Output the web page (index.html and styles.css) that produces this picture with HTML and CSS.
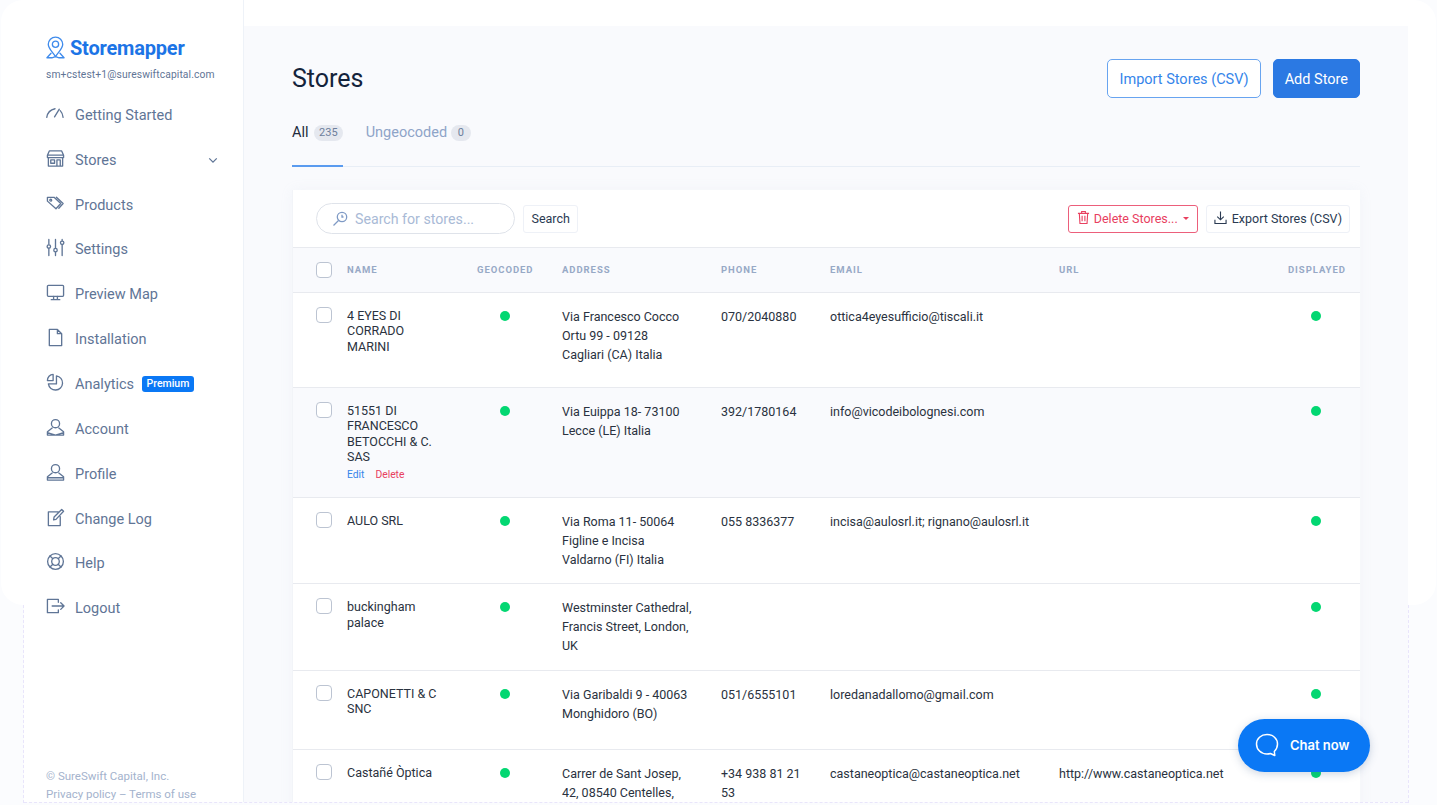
FILE: index.html
```html
<!DOCTYPE html>
<html lang="en">
<head>
<meta charset="utf-8">
<title>Storemapper – Stores</title>
<link rel="stylesheet" href="styles.css">
</head>
<body>
<div class="backdrop"></div>
<div class="app">
  <aside class="sidebar">
    <div class="brand">
      <svg class="brand-pin" viewBox="0 0 20 24" fill="none" stroke="currentColor" stroke-width="1.4" stroke-linejoin="round" stroke-linecap="round"><path d="M10 1a7.6 7.6 0 0 1 7.6 7.6c0 4.6-4.4 7.9-7.6 12.9C6.8 16.500 2.400 13.200 2.400 8.600A7.600 7.600 0 0 1 10 1z"/><circle cx="10" cy="8.500" r="3.300"/><path d="M5.300 18 1 22.800h5.200l3.800-1.300 3.800 1.300H19L14.700 18"/></svg>
      <span class="brand-name">Storemapper</span>
    </div>
    <div class="account-email">sm+cstest+1@sureswiftcapital.com</div>
    <nav class="nav">
      <a class="nav-item"><svg class="nav-icon" viewBox="0 0 20 20"><path d="M.8 14C1.500 9.500 5 6 9.500 5M9 13.500 14 5.500M15 7c1.500 1.500 2.500 4 3 7"/></svg><span>Getting Started</span></a>
      <a class="nav-item"><svg class="nav-icon" viewBox="0 0 20 20"><path d="M3.500 2h13l2 4.500h-17zM1.500 6.500v2.500h17V6.500M2.500 9v9h15V9M5 11.500h4v3.500H5zM11.500 18v-6.500h3.500V18"/></svg><span>Stores</span><svg class="nav-caret" viewBox="0 0 12 8"><path d="M1.500 1.500 6 6l4.500-4.500"/></svg></a>
      <a class="nav-item"><svg class="nav-icon" viewBox="0 0 20 20"><path d="M1.500 3.500h7l7 6.500-5 5.500-9-8zM11 3.500l7 6.500-4.500 5"/><circle cx="5" cy="6.500" r="1"/></svg><span>Products</span></a>
      <a class="nav-item"><svg class="nav-icon" viewBox="0 0 20 20"><path d="M3 1.500v5M3 11.500v7M10 1.500v9M10 15v3.500M17 1.500v1M17 7.500v11"/><circle cx="3" cy="9" r="1.800"/><circle cx="10" cy="12.800" r="1.800"/><circle cx="17" cy="5" r="1.800"/></svg><span>Settings</span></a>
      <a class="nav-item"><svg class="nav-icon" viewBox="0 0 20 20"><rect x="1.500" y="2.500" width="17" height="11.500" rx="1"/><path d="M8 14v3M12 14v3M5.500 17.500h9"/></svg><span>Preview Map</span></a>
      <a class="nav-item"><svg class="nav-icon" viewBox="0 0 20 20"><path d="M3.500 1.500h8.500l4.500 4.500v12.500h-13zM12 1.500V6h4.500"/></svg><span>Installation</span></a>
      <a class="nav-item"><svg class="nav-icon" viewBox="0 0 20 20"><path d="M11 3a7.500 7.500 0 1 1-8.500 8.500H11zM7.500 1.500v6.500H1.500c0-3.500 2.500-6.500 6-6.500z"/></svg><span>Analytics</span><span class="premium">Premium</span></a>
      <a class="nav-item"><svg class="nav-icon" viewBox="0 0 20 20"><circle cx="10" cy="6" r="4.300"/><path d="M6.500 10.500 1.500 14.500v3.500h17v-3.500l-5-4M1.500 15.500l8.500 2.500 8.500-2.500"/></svg><span>Account</span></a>
      <a class="nav-item"><svg class="nav-icon" viewBox="0 0 20 20"><circle cx="10" cy="6" r="4.300"/><path d="M6.500 10.500 1.500 14.500v3.500h17v-3.500l-5-4M1.500 15.500h17"/></svg><span>Profile</span></a>
      <a class="nav-item"><svg class="nav-icon" viewBox="0 0 20 20"><path d="M13 4H2.500v14.500H15V9M8 12.500l.5-3L16.500 1.500l2 2L10.500 12z"/></svg><span>Change Log</span></a>
      <a class="nav-item"><svg class="nav-icon" viewBox="0 0 20 20"><circle cx="10" cy="10" r="8.300"/><circle cx="10" cy="10" r="4"/><path d="M4.200 4.200 7.200 7.200M15.800 4.200l-3 3M4.200 15.800l3-3M15.800 15.800l-3-3"/></svg><span>Help</span></a>
      <a class="nav-item"><svg class="nav-icon" viewBox="0 0 20 20"><path d="M13 5.500V2.500H1.500v14H13v-3M6.500 9.500h12.500M15.500 6l3.500 3.500-3.500 3.500"/></svg><span>Logout</span></a>
    </nav>
    <footer class="side-footer">
      <div>© SureSwift Capital, Inc.</div>
      <div>Privacy policy – Terms of use</div>
    </footer>
  </aside>
  <main class="main">
    <header class="page-head">
      <h1 class="page-title">Stores</h1>
      <div class="head-actions">
        <button class="btn btn-outline">Import Stores (CSV)</button>
        <button class="btn btn-primary">Add Store</button>
      </div>
    </header>
    <div class="tabs">
      <a class="tab tab-active">All <span class="count">235</span></a>
      <a class="tab">Ungeocoded <span class="count count-small">0</span></a>
    </div>
    <section class="card">
      <div class="toolbar">
        <div class="search-box">
          <svg class="search-icon" viewBox="0 0 16 16"><circle cx="10" cy="6" r="4.700"/><path d="M6.500 9.500 1.500 14.500"/><path d="M10 3.800V6h1.500"/></svg>
          <span class="search-placeholder">Search for stores...</span>
        </div>
        <button class="tool-btn tool-search">Search</button>
        <button class="tool-btn tool-danger">
          <svg class="tool-icon" viewBox="0 0 14 16"><path d="M1 3.500h12M5 3.500V1.500h4v2M2.500 3.500l.7 11h7.600l.7-11M5.500 6v6M8.500 6v6"/></svg>
          <span>Delete Stores...</span><i class="caret"></i>
        </button>
        <button class="tool-btn">
          <svg class="tool-icon" viewBox="0 0 14 16"><path d="M7 1.500v8.500M3.500 7 7 10.500 10.500 7M1 10.500v4h12v-4"/></svg>
          <span>Export Stores (CSV)</span>
        </button>
      </div>
      <div class="row row-head">
        <div><span class="check"></span></div>
        <div>Name</div><div>Geocoded</div><div>Address</div><div>Phone</div><div>Email</div><div>URL</div><div>Displayed</div>
      </div>
      <div class="row">
        <div><span class="check"></span></div>
        <div class="name">4 EYES DI<br>CORRADO<br>MARINI<div class="actions actions-hidden"><a class="edit">Edit</a><a class="delete">Delete</a></div></div>
        <div><i class="dot"></i></div>
        <div>Via Francesco Cocco<br>Ortu 99 - 09128<br>Cagliari (CA) Italia</div>
        <div>070/2040880</div><div>ottica4eyesufficio@tiscali.it</div><div></div><div><i class="dot"></i></div>
      </div>
      <div class="row row-hover">
        <div><span class="check"></span></div>
        <div class="name">51551 DI<br>FRANCESCO<br>BETOCCHI &amp; C.<br>SAS<div class="actions"><a class="edit">Edit</a><a class="delete">Delete</a></div></div>
        <div><i class="dot"></i></div>
        <div>Via Euippa 18- 73100<br>Lecce (LE) Italia</div>
        <div>392/1780164</div><div>info@vicodeibolognesi.com</div><div></div><div><i class="dot"></i></div>
      </div>
      <div class="row">
        <div><span class="check"></span></div>
        <div class="name">AULO SRL<div class="actions actions-hidden"><a class="edit">Edit</a><a class="delete">Delete</a></div></div>
        <div><i class="dot"></i></div>
        <div>Via Roma 11- 50064<br>Figline e Incisa<br>Valdarno (FI) Italia</div>
        <div>055 8336377</div><div>incisa@aulosrl.it; rignano@aulosrl.it</div><div></div><div><i class="dot"></i></div>
      </div>
      <div class="row">
        <div><span class="check"></span></div>
        <div class="name">buckingham<br>palace<div class="actions actions-hidden"><a class="edit">Edit</a><a class="delete">Delete</a></div></div>
        <div><i class="dot"></i></div>
        <div>Westminster Cathedral,<br>Francis Street, London,<br>UK</div>
        <div></div><div></div><div></div><div><i class="dot"></i></div>
      </div>
      <div class="row">
        <div><span class="check"></span></div>
        <div class="name">CAPONETTI &amp; C<br>SNC<div class="actions actions-hidden"><a class="edit">Edit</a><a class="delete">Delete</a></div></div>
        <div><i class="dot"></i></div>
        <div>Via Garibaldi 9 - 40063<br>Monghidoro (BO)</div>
        <div>051/6555101</div><div>loredanadallomo@gmail.com</div><div></div><div><i class="dot"></i></div>
      </div>
      <div class="row">
        <div><span class="check"></span></div>
        <div class="name">Castañé Òptica</div>
        <div><i class="dot"></i></div>
        <div>Carrer de Sant Josep,<br>42, 08540 Centelles,</div>
        <div>+34 938 81 21<br>53</div><div>castaneoptica@castaneoptica.net</div><div>http://www.castaneoptica.net</div><div><i class="dot"></i></div>
      </div>
    </section>
  </main>
</div>
<button class="chat">
  <svg class="chat-icon" viewBox="0 0 24 24"><path d="M12 1.500c6 0 10.500 4 10.500 9.500 0 3.500-1.600 6-3.200 7.500l.5 4-4.300-2c-1.100.3-2.300.5-3.500.5-6 0-10.500-4.500-10.500-10S6 1.500 12 1.500z"/></svg>
  <span>Chat now</span>
</button>
</body>
</html>
```
FILE: styles.css
```css
* { box-sizing: border-box; }
html, body { margin: 0; height: 100%; }
body {
  position: relative;
  height: 805px;
  overflow: hidden;
  background: #fbfcfe;
  font-family: Roboto, "Liberation Sans", sans-serif;
  color: #1f2a3c;
}
.backdrop {
  position: absolute;
  top: 0;
  left: 1px;
  right: 1px;
  height: 605px;
  background: #fff;
  border-radius: 22px;
}
.app {
  position: relative;
  display: flex;
  width: 1384px;
  height: 803px;
  margin-left: 24px;
  border-bottom: 1px dashed #e9e5fb;
}
.app::before {
  content: "";
  position: absolute;
  top: 605px;
  bottom: -1px;
  left: -1px;
  right: -1px;
  border-left: 1px dashed #e9e5fb;
  border-right: 1px dashed #e9e5fb;
}
.sidebar {
  position: relative;
  flex: 0 0 220px;
  display: flex;
  flex-direction: column;
  padding: 36px 0 0 22px;
  background: #fff;
  border-right: 1px solid #eef2f8;
}
.brand { display: flex; align-items: center; gap: 5px; height: 23px; color: #1a73e8; }
.brand-pin { width: 19px; height: 23px; color: #3f8bec; }
.brand-name { font-size: 20px; font-weight: 700; letter-spacing: -0.2px; color: #1c74e6; }
.account-email { margin-top: 8px; font-size: 10.300px; line-height: 16px; color: #5f7596; letter-spacing: .1px; }
.nav { display: flex; flex-direction: column; margin-top: 10px; }
.nav-item {
  display: flex;
  align-items: center;
  height: 44.850px;
  width: 176px;
  font-size: 14.500px;
  color: #5f7596;
}
.nav-icon {
  flex: none;
  width: 19px;
  height: 19px;
  margin: -4px 10px 0 0;
  fill: none;
  stroke: #5f7596;
  stroke-width: 1.400;
  stroke-linejoin: round;
  stroke-linecap: round;
}
.nav-caret { width: 10px; height: 7px; margin-left: auto; margin-right: 4px; fill: none; stroke: #5f7596; stroke-width: 1.500; }
.premium {
  margin-left: 8px;
  padding: 0 4.500px;
  height: 16px;
  line-height: 16px;
  border-radius: 3px;
  background: #0a78f5;
  color: #fff;
  font-size: 10.500px;
  font-weight: 500;
}
.side-footer { margin-top: auto; margin-bottom: -1px; font-size: 11.500px; line-height: 17.500px; color: #a4b3cd; }
.main {
  position: relative;
  flex: 1;
  min-width: 0;
  margin-top: 26px;
  padding: 33px 48px 0;
  background: #f9fafd;
  overflow: hidden;
}
.page-head { display: flex; align-items: center; justify-content: space-between; height: 39px; }
.page-title { margin: 0; font-size: 25px; font-weight: 400; color: #14233b; }
.head-actions { display: flex; gap: 12px; }
.btn { height: 39px; padding: 1px 11px 0; border-radius: 5px; font: 400 14.500px Roboto, sans-serif; }
.btn-outline { background: #fff; border: 1px solid #68a4f0; color: #3585ea; }
.btn-primary { background: #2b79e3; border: 1px solid #2b79e3; color: #fff; }
.tabs {
  display: flex;
  gap: 23px;
  height: 43px;
  margin-top: 26px;
  border-bottom: 1px solid #e8eef6;
}
.tab { height: 43px; font-size: 14.500px; line-height: 18px; color: #8ea4c8; border-bottom: 2px solid transparent; }
.tab-active { color: #1f2a3c; border-bottom-color: #5a9bef; }
.count {
  display: inline-block;
  margin-left: 2px;
  height: 16px;
  padding: 0 5px;
  border-radius: 8px;
  background: #e5e8ef;
  color: #6d7f9c;
  font-size: 11px;
  line-height: 16px;
  vertical-align: 1px;
}
.count-small { margin-left: 0; padding: 0 7px; }
.card {
  margin-top: 23px;
  background: #fff;
  border-left: 1px solid #f2f4f8;
  box-shadow: 0 0 12px rgba(170, 185, 215, .09);
}
.toolbar {
  display: flex;
  align-items: center;
  gap: 8px;
  height: 57px;
  padding: 0 10px 0 23px;
}
.search-box {
  display: flex;
  align-items: center;
  gap: 7px;
  width: 199px;
  height: 31px;
  padding-left: 15px;
  border: 1.500px solid #dfe3ea;
  border-radius: 16px;
}
.search-icon { width: 16px; height: 16px; fill: none; stroke: #7f9ac5; stroke-width: 1.300; }
.search-placeholder { font-size: 14.200px; color: #a9bad6; }
.tool-btn {
  display: flex;
  align-items: center;
  gap: 5px;
  height: 28px;
  padding: 0 7px;
  background: #fff;
  border: 1.500px solid #eef1f7;
  border-radius: 3px;
  font: 400 12.500px Roboto, sans-serif;
  color: #2a3a52;
}
.tool-search { padding: 0 7.500px; }
.tool-icon { width: 13px; height: 15px; margin-top: -3px; fill: none; stroke: currentColor; stroke-width: 1.200; }
.tool-danger { gap: 4px; margin-left: auto; padding: 0 8px; border-color: #ec5f7b; color: #e8405f; }
.caret { width: 0; height: 0; margin-left: 1px; border: 3.500px solid transparent; border-top-color: #e8405f; border-bottom: 0; }
.row {
  display: grid;
  grid-template-columns: 54px 130px 85px 159px 109px 229px 229px 1fr;
  padding: 15px 0 14px;
  border-top: 1px solid #e8eaef;
  font-size: 12.500px;
  line-height: 18.800px;
  color: #2a3240;
}
.row-hover { background: #f9fafd; }
.row-head {
  align-items: center;
  height: 45px;
  padding: 0;
  background: #f9fafd;
  font-size: 9.500px;
  font-weight: 700;
  letter-spacing: .95px;
  line-height: 12px;
  text-transform: uppercase;
  color: #97a9c6;
}
.check {
  display: block;
  width: 16px;
  height: 16px;
  margin: -1px 0 0 23px;
  background: #fff;
  border: 1.500px solid #bcc4d2;
  border-radius: 4px;
}
.row-head .check { margin-top: 0; }
.name { line-height: 15.400px; }
.actions { display: flex; gap: 11px; height: 18.600px; padding-top: 3px; font-size: 10.300px; line-height: 15px; }
.actions-hidden { visibility: hidden; }
.edit { color: #3585ea; }
.delete { color: #e8405f; }
.dot { display: block; width: 10px; height: 10px; margin: 3px 0 0 23px; border-radius: 50%; background: #03d772; }
.chat {
  position: absolute;
  left: 1238px;
  top: 719px;
  display: flex;
  align-items: center;
  gap: 11px;
  width: 132px;
  height: 53px;
  padding: 0 0 1px 17px;
  border: 0;
  border-radius: 27px;
  background: #0a78f5;
  box-shadow: 0 2px 8px rgba(60, 90, 140, .25);
  color: #fff;
  font: 600 13px Inter, Roboto, sans-serif;
}
.chat-icon { width: 24px; height: 24px; fill: none; stroke: #fff; stroke-width: 1.500; stroke-linejoin: round; }
```
